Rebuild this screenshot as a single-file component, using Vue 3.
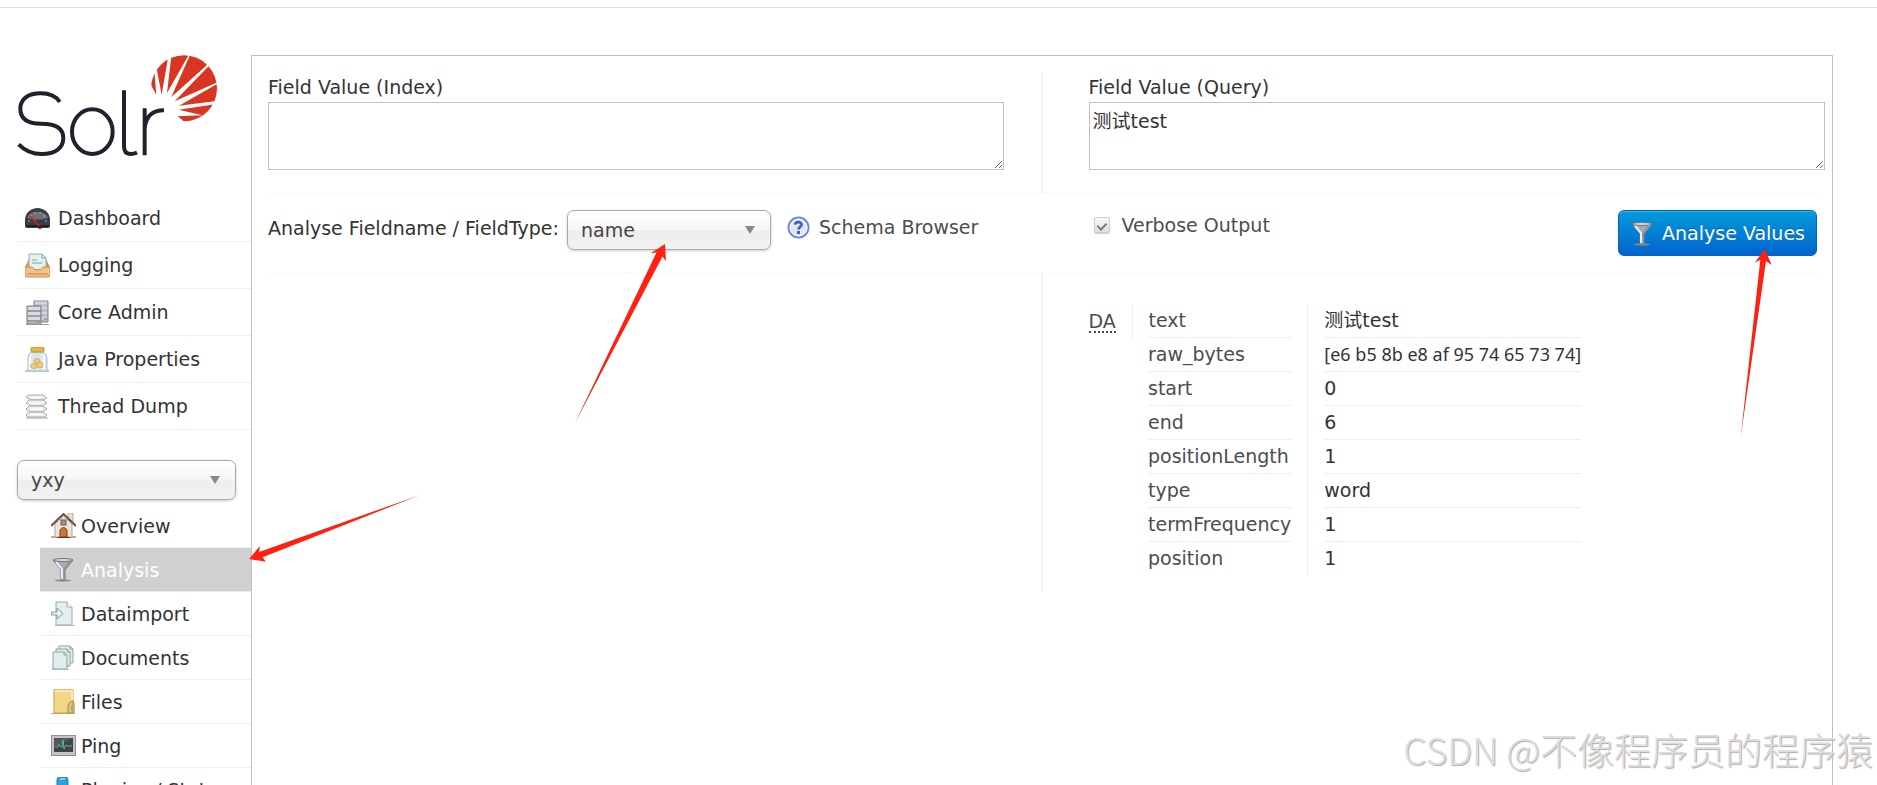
<template>
  <div class="page">
    <div class="wrapper">
      <aside class="sidebar">
        <a class="logo" href="#/" aria-label="Solr">
          <svg width="201" height="102" viewBox="51 164 603 306">
            <defs>
              <clipPath id="sun"><circle cx="552" cy="264" r="99" /></clipPath>
            </defs>
            <g clip-path="url(#sun)" fill="#d93523">
              <polygon v-for="ray in rays" :key="ray" :points="ray" />
            </g>
            <g fill="none" stroke="#231f2b" stroke-width="12">
              <path d="M179 305C168 287 148 279 122 279C84 279 61 296 61 325C61 356 84 370 124 370C168 370 190 384 190 413C190 444 164 461 126 461C98 461 74 451 56 432" />
              <ellipse cx="277" cy="394" rx="61" ry="67" />
              <path d="M372 270V438C372 454 379 461 391 461C399 461 404 460 411 457" />
              <path d="M434 324V465M434 384C438 347 456 330 492 330" />
            </g>
          </svg>
        </a>

        <ul class="menu">
          <li v-for="item in mainMenu" :key="item.label">
            <a href="#/">
              <svg class="icon" viewBox="0 0 25 25" v-html="icons[item.icon]"></svg>
              <span>{{ item.label }}</span>
            </a>
          </li>
        </ul>

        <div class="dropdown core-select">
          <select v-model="core" aria-label="Core Selector">
            <option>yxy</option>
          </select>
          <svg class="caret" viewBox="0 0 10 8"><path d="M0 0H10L5 8Z" fill="#888" /></svg>
        </div>

        <ul class="menu core-menu">
          <li v-for="item in coreMenu" :key="item.label" :class="{ active: item.label === current }">
            <a href="#/">
              <svg class="icon" viewBox="0 0 25 25" v-html="icons[item.icon]"></svg>
              <span>{{ item.label }}</span>
            </a>
          </li>
        </ul>
      </aside>

      <main class="content">
        <form @submit.prevent>
          <div class="columns">
            <div class="col-left field">
              <label for="fieldIndex">Field Value (Index)</label>
              <textarea id="fieldIndex" v-model="indexValue"></textarea>
            </div>
            <div class="col-right field">
              <label for="fieldQuery">Field Value (Query)</label>
              <textarea id="fieldQuery" v-model="queryValue"></textarea>
            </div>
          </div>

          <div class="controls">
            <div class="control-left">
              <label for="fieldType">Analyse Fieldname / FieldType:</label>
              <div class="dropdown type-select">
                <select id="fieldType" v-model="fieldType">
                  <option>name</option>
                </select>
                <svg class="caret" viewBox="0 0 10 8"><path d="M0 0H10L5 8Z" fill="#888" /></svg>
              </div>
              <a class="schema" href="#/">
                <svg width="23" height="23" viewBox="0 0 23 23">
                  <circle cx="11.5" cy="11.5" r="10" fill="#e3e5ea" stroke="#6b86ea" stroke-width="2" />
                  <circle cx="11.5" cy="11.5" r="8.5" fill="none" stroke="#fff" />
                  <path d="M8.2 8.6C8.4 5.4 14.6 5.2 14.6 8.6C14.6 11 11.5 10.8 11.5 13.6" fill="none" stroke="#3a5bd0" stroke-width="2.6" />
                  <rect x="10" y="15" width="3" height="3" fill="#3a5bd0" />
                </svg>
                <span>Schema Browser</span>
              </a>
            </div>
            <div class="control-right">
              <label class="verbose">
                <input v-model="verbose" type="checkbox" />
                <span>Verbose Output</span>
              </label>
              <button type="submit" class="analyse">
                <svg class="icon" viewBox="0 0 25 25" v-html="icons.funnel"></svg>
                <span>Analyse Values</span>
              </button>
            </div>
          </div>
        </form>

        <div class="columns">
          <div class="col-left"></div>
          <div class="col-right result">
            <table>
              <tbody>
                <tr v-for="(row, i) in rows" :key="row.key">
                  <td class="analyzer" :class="{ first: i === 0 }">
                    <abbr v-if="i === 0" title="DefaultAnalyzer">DA</abbr>
                  </td>
                  <th scope="row"><div>{{ row.key }}</div></th>
                  <td class="value" :class="row.key"><div>{{ row.value }}</div></td>
                </tr>
              </tbody>
            </table>
          </div>
        </div>
      </main>
    </div>

    <svg class="arrow arrow-menu" width="172" height="68" viewBox="249 495 172 68">
      <polygon points="249,559 260,546 259,552 420,495 262.7,557.3 265.7,561.7" />
    </svg>
    <svg class="arrow arrow-type" width="92" height="180" viewBox="575 244 92 180">
      <polygon points="665,244 651,253 656.5,252.5 575,423 662.5,256.5 666,261" />
    </svg>
    <svg class="arrow arrow-button" width="32" height="188" viewBox="1740 249 32 188">
      <polygon points="1764.7,249 1755,262.5 1760.3,260 1740.7,437 1766,261 1771.7,265" />
    </svg>

    <div class="watermark">CSDN @不像程序员的程序猿</div>
  </div>
</template>

<script setup>
import { ref } from 'vue'

const core = ref('yxy')
const current = ref('Analysis')
const fieldType = ref('name')
const verbose = ref(true)
const indexValue = ref('')
const queryValue = ref('测试test')

const mainMenu = [
  { label: 'Dashboard', icon: 'gauge' },
  { label: 'Logging', icon: 'inbox' },
  { label: 'Core Admin', icon: 'servers' },
  { label: 'Java Properties', icon: 'jar' },
  { label: 'Thread Dump', icon: 'threads' }
]

const coreMenu = [
  { label: 'Overview', icon: 'house' },
  { label: 'Analysis', icon: 'funnel' },
  { label: 'Dataimport', icon: 'import' },
  { label: 'Documents', icon: 'documents' },
  { label: 'Files', icon: 'folder' },
  { label: 'Ping', icon: 'monitor' },
  { label: 'Plugins / Stats', icon: 'plugin' }
]

const rows = [
  { key: 'text', value: '测试test' },
  { key: 'raw_bytes', value: '[e6 b5 8b e8 af 95 74 65 73 74]' },
  { key: 'start', value: '0' },
  { key: 'end', value: '6' },
  { key: 'positionLength', value: '1' },
  { key: 'type', value: 'word' },
  { key: 'termFrequency', value: '1' },
  { key: 'position', value: '1' }
]

// Sun rays of the logo, cut to a disc by the clip path
const rays = [
  '440,260 440,170 462,200 469,284 452,252',
  '468,190 508,150 485,283 470,205',
  '516,150 574,150 499,282 501,278',
  '574,155 640,150 618,197 514,290',
  '627,196 670,180 670,238 524,303',
  '660,246 680,290 650,302 537,316',
  '660,310 640,350 607,345 536,328',
  '612,345 590,380 560,370 533,348'
]

const icons = {
  gauge: `
    <path d="M0 20V14A12.500 12 0 0 1 25 14V20Q25 22 23 22H2Q0 22 0 20Z" fill="#3c3d42"/>
    <path d="M2 12A11 9 0 0 1 23 12Q12 15 2 12Z" fill="#707176"/>
    <path d="M1 20H24" stroke="#1f2024" stroke-width="2"/>
    <g fill="#b9babf"><circle cx="4" cy="15" r="0.800"/><circle cx="6" cy="10" r="0.800"/><circle cx="10" cy="7" r="0.800"/><circle cx="15" cy="7" r="0.800"/><circle cx="19" cy="10" r="0.800"/><circle cx="21" cy="15" r="0.800"/></g>
    <path d="M5 10L15 21" stroke="#d2232f" stroke-width="1.600"/>
    <circle cx="15" cy="21" r="2" fill="#4b2227"/>`,
  inbox: `
    <path d="M4 6H21L25 14V22Q25 24 23 24H2Q0 24 0 22V14Z" fill="#cd9658"/>
    <path d="M4 1H17L21 5V17H4Z" fill="#e3f0ef" stroke="#90b4b2"/>
    <path d="M17 1V5H21M7 7H12M7 10H17" fill="none" stroke="#7ba5a3"/>
    <path d="M0 14H7Q8 17 12.500 17Q17 17 18 14H25V22Q25 24 23 24H2Q0 24 0 22Z" fill="#f0c28e" stroke="#cc8b48"/>
    <path d="M2 21H23" stroke="#dfa366" stroke-width="2"/>`,
  servers: `
    <path d="M9 1H23V22H9Z" fill="#b7b8c1" stroke="#85868c"/>
    <path d="M10 3H22M10 8H22M10 13H22M10 18H22" stroke="#d2d2e2" stroke-width="3"/>
    <path d="M2 6H16V24H2Z" fill="#bdc1c1" stroke="#7a7e7e"/>
    <path d="M3 8.500H15M3 13.500H15M3 18.500H15" stroke="#d9dbe2" stroke-width="3"/>
    <path d="M2 11H16M2 16H16M2 21H16" stroke="#777b7b"/>
    <path d="M11 22.500H16M19 19H22" stroke="#83b78b" stroke-width="2"/>
    <path d="M1 24.500H24" stroke="#999"/>`,
  jar: `
    <path d="M0 24H24" stroke="#c5c8cb" stroke-width="2"/>
    <path d="M6 5H18Q22 7 22 11V24H3V11Q3 7 6 5Z" fill="#d9e9f4" stroke="#9cbdd2"/>
    <path d="M6 7Q4 9 5 22M19 8V22" fill="none" stroke="#f8fcff" stroke-width="2"/>
    <rect x="6" y="0" width="13" height="5" rx="1.500" fill="#e4b64e" stroke="#bd8c2c"/>
    <g fill="#edcb7c" stroke="#d3ae62"><ellipse cx="12" cy="14" rx="3" ry="2.500"/><ellipse cx="9" cy="19" rx="3.500" ry="2.500"/><ellipse cx="15" cy="18" rx="3" ry="3"/></g>`,
  threads: `
    <path d="M1 24H23" stroke="#ccc" stroke-width="2"/>
    <g fill="#ededed" stroke="#aaa"><path d="M3 1H18L22 4L17 6H6L1 3Z"/><path d="M4 6H18L22 9L17 12H6L1 9Z"/><path d="M4 12H18L22 15L17 18H6L1 15Z"/><path d="M4 18H18L22 21L20 23H3L1 21Z"/></g>
    <path d="M6 3.500H17M6 9H18M6 15H18M6 20.500H18" stroke="#fff"/>`,
  house: `
    <path d="M0 24H25" stroke="#b9aaa2" stroke-width="2"/>
    <rect x="17" y="0" width="5" height="8" fill="#f1ddd0" stroke="#bda79c"/>
    <path d="M4 11L12.500 3L21 11V24H4Z" fill="#f2e4d4" stroke="#b9a18d"/>
    <path d="M0 13L12.500 1L25 13" fill="none" stroke="#63535a" stroke-width="2"/>
    <rect x="10" y="7" width="5" height="5" fill="#8f96a9" stroke="#735c50"/>
    <path d="M9 24V17Q12.500 12 16 17V24Z" fill="#c57838" stroke="#7b3f20"/>
    <path d="M6 24.500H19" stroke="#6b2a2a"/>`,
  funnel: `
    <ellipse cx="12" cy="23.500" rx="8" ry="1" fill="#8c8c90"/>
    <path d="M2 3L10 13V23Q12 24 14 23V13L22 3Z" fill="#a9a9b3" stroke="#77777f"/>
    <path d="M5 5L11 12V22" fill="none" stroke="#ececf1" stroke-width="2"/>
    <path d="M16 5H18L13 12V22" fill="none" stroke="#86868f"/>
    <ellipse cx="12" cy="3" rx="10" ry="1.500" fill="#d7d7dd" stroke="#77777f"/>`,
  import: `
    <path d="M4 24.500H24" stroke="#bbb"/>
    <path d="M5 1H16L21 6V24H5Z" fill="#e5eeee" stroke="#94abab"/>
    <path d="M16 1V6H21" fill="#fff" stroke="#94abab"/>
    <path d="M0.500 11H6V7L12 12.500L6 18V14H0.500Z" fill="#e9f0f0" stroke="#879b9b"/>`,
  documents: `
    <g fill="#e1ecec" stroke="#8ba5a5"><path d="M8 1H19L22 4V18H8Z"/><path d="M5 4H16L19 7V21H5Z"/><path d="M2 7H13L16 10V24H2Z"/></g>
    <path d="M19 1V4H22M16 4V7H19M13 7V10H16" fill="none" stroke="#8ba5a5"/>
    <path d="M1 24.500H18" stroke="#aebbbb"/>`,
  folder: `
    <path d="M0 24.500H24" stroke="#b3a88a"/>
    <path d="M3 1Q3 0 4 0H21Q22 0 22 1V12Q24 13 23 24H3Z" fill="#f3d587" stroke="#c79f4d"/>
    <path d="M4 2H21V11" fill="none" stroke="#fae9b4" stroke-width="2"/>
    <path d="M17 24V16Q19 12 22 12V24Z" fill="#e8bf6d" stroke="#b98b42"/>
    <path d="M20 17H22V22H20Z" fill="#69b8d4"/>`,
  monitor: `
    <rect x="0.500" y="2.500" width="24" height="20" fill="#c3c4c8" stroke="#929397"/>
    <rect x="3" y="5" width="19" height="14" fill="#55595d"/>
    <path d="M3 14L22 5V19H3Z" fill="#404448"/>
    <path d="M4 14H7L8 11L10 14H11L12 7L13 16L15 12L17 13H21" fill="none" stroke="#4fc09a"/>
    <path d="M0 22.500H25" stroke="#8b8c90"/>`,
  plugin: `
    <path d="M6 3Q6 0 9 0H14Q17 0 17 3V10H20V25H3V10H6Z" fill="#319fd8" stroke="#1b7db5"/>
    <path d="M9 2H14" stroke="#7cccf2" stroke-width="2"/>`
}
</script>

<style>
body {
  margin: 0;
  background: #fff;
}
</style>

<style scoped>
.page {
  position: relative;
  box-sizing: border-box;
  height: 100vh;
  padding-top: 7px;
  overflow: hidden;
  color: #333;
  font-family: 'DejaVu Sans', 'Noto Sans CJK SC', sans-serif;
  font-size: 19px;
  line-height: 32px;
}

.wrapper {
  display: flex;
  box-sizing: border-box;
  height: 100%;
  padding: 47px 44px 0 17px;
  border-top: 1px solid #e0e0e0;
}

a {
  color: inherit;
  text-decoration: none;
}

select,
textarea,
button {
  font: inherit;
  color: inherit;
}

.sidebar { width: 234px; flex-shrink: 0; }
.logo { display: block; height: 140px; }
.logo svg { display: block; }

.menu { list-style: none; margin: 0; padding: 0; }
.menu li { border-bottom: 1px solid #eee; }
.menu a { display: flex; align-items: center; gap: 8px; height: 46px; padding-left: 8px; white-space: nowrap; }
.icon { width: 25px; height: 25px; flex-shrink: 0; }

.core-menu { margin: 4px 0 0 23px; }
.core-menu a { height: 43px; padding-left: 11px; gap: 5px; }
.core-menu .active { background: #d0d0d0; color: #fff; }

.dropdown { position: relative; }
.dropdown select {
  display: block;
  box-sizing: border-box;
  width: 100%;
  height: 40px;
  padding: 0 13px;
  appearance: none;
  border: 1px solid #aaa;
  border-radius: 7px;
  background: linear-gradient(#fff 0%, #f6f6f6 50%, #eee 52%, #f2f2f2 100%);
  box-shadow: 0 1px 3px rgba(0, 0, 0, 0.2);
  color: #444;
}
.caret { position: absolute; right: 16px; top: 16px; width: 10px; height: 8px; pointer-events: none; }
.core-select { width: 219px; margin-top: 30px; }
.type-select { width: 204px; }

.content {
  flex: 1;
  min-width: 0;
  padding: 16px 7px 0 16px;
  border: 1px solid #c0c0c0;
  border-bottom: 0;
}

.columns { display: flex; }
.col-left {
  box-sizing: border-box;
  width: calc(50% - 4px);
  padding-right: 37px;
  border-right: 2px solid #f0f0f0;
}
.col-right { flex: 1; padding-left: 46px; }
.field { height: 121px; }
.field label { display: block; line-height: 30px; }
.field textarea {
  display: block;
  box-sizing: border-box;
  width: 100%;
  height: 68px;
  padding: 3px;
  border: 1px solid #c0c0c0;
  line-height: 30px;
  resize: both;
}

.controls {
  display: flex;
  margin-right: 8px;
  padding: 16px 0;
  border: solid #f8f8f8;
  border-width: 1px 0;
}
.control-left { display: flex; width: 50%; gap: 8px; line-height: 36px; white-space: nowrap; }
.schema { display: flex; align-items: center; gap: 9px; height: 34px; margin-left: 8px; color: #4d4d4d; }
.control-right { display: flex; flex: 1; justify-content: space-between; padding-left: 51px; }
.verbose { display: flex; align-items: center; gap: 12px; height: 30px; color: #4d4d4d; }
.verbose input {
  display: grid;
  place-items: center;
  width: 16px;
  height: 16px;
  margin: 0;
  appearance: none;
  border: 1px solid #ccc;
  border-radius: 2px;
  background: linear-gradient(#fafafa, #ddd);
  box-shadow: 0 1px 1px rgba(0, 0, 0, 0.2);
}
.verbose input:checked::after {
  content: '';
  width: 4px;
  height: 7px;
  border: solid #777;
  border-width: 0 2px 2px 0;
  transform: rotate(45deg);
}

.analyse {
  display: flex;
  align-items: center;
  gap: 7px;
  height: 46px;
  padding: 0 11px;
  border: 1px solid #0263b4;
  border-radius: 6px;
  background: linear-gradient(#049cdb, #0064cd);
  box-shadow: inset 0 1px 0 rgba(255, 255, 255, 0.2), 0 1px 2px rgba(0, 0, 0, 0.05);
  color: #fff;
  text-shadow: 0 -1px 0 rgba(0, 0, 0, 0.25);
  white-space: nowrap;
}

.result { padding-top: 31px; padding-bottom: 15px; }
table { border-collapse: collapse; }
th,
td { padding: 0; text-align: left; font-weight: 400; }
th { color: #4d4d4d; padding: 0 16px; border-right: 1px solid #eee; }
th div,
.value div { height: 33px; border-bottom: 1px solid #eee; }
tr:last-child th div,
tr:last-child .value div { border-bottom-color: transparent; }
.value { padding-left: 16px; }
.raw_bytes { font-family: 'Noto Sans', sans-serif; font-size: 18px; }
.analyzer { width: 43px; color: #4d4d4d; }
.first { border-right: 1px solid #eee; }
abbr { text-decoration: none; border-bottom: 2px dotted #4d4d4d; display: inline-block; line-height: 20px; }

.arrow { position: absolute; fill: #ff2012; pointer-events: none; }
.arrow-menu { left: 249px; top: 495px; }
.arrow-type { left: 575px; top: 244px; }
.arrow-button { right: 105px; top: 249px; }

.watermark {
  position: absolute;
  right: 4px;
  bottom: 12px;
  color: #ddd;
  font-family: 'Noto Sans CJK SC', sans-serif;
  font-size: 37px;
  font-weight: 300;
  line-height: 48px;
  text-shadow: 1px 1px 1px #aaa;
  white-space: nowrap;
}
</style>
